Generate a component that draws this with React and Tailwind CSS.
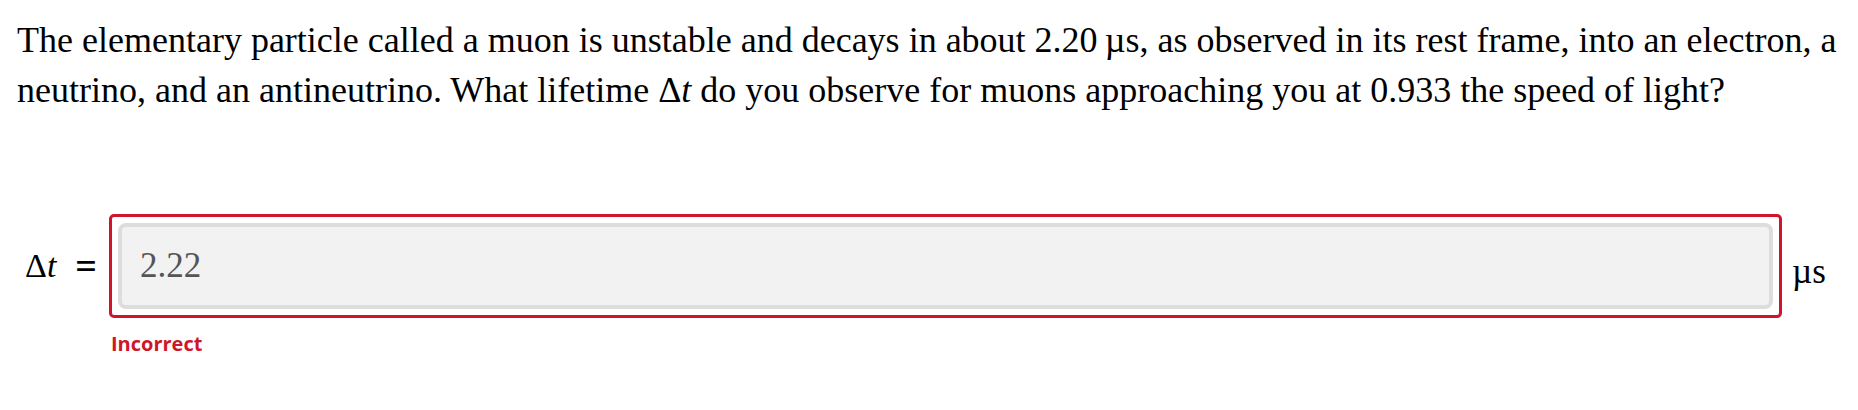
export default function App() {
  return (
    <div className="w-[1858px] h-[410px] bg-white pl-[17px] pt-[15px] font-['Liberation_Serif',_'Times_New_Roman',_serif] text-black">
      <p className="w-[1835px] text-[36px] leading-[50px]">
        The elementary particle called a muon is unstable and decays in about 2.20{'\u2009'}µs, as observed in its rest frame, into an
        electron, a neutrino, and an antineutrino. What lifetime Δ<i>t</i> do you observe for muons approaching you at 0.933 the speed
        of light?
      </p>

      <div className="mt-[99px] flex items-center">
        <div className="flex w-[92px] items-center pl-[8px] text-[34px] leading-none">
          <span>
            Δ<i>t</i>
          </span>
          <span className="ml-[19px] text-[38px] font-bold">=</span>
        </div>
        <div className="w-[1673px] rounded-[5px] border-[3px] border-[#d0152b] p-[6px]">
          <div className="flex h-[86px] items-center rounded-[8px] border-[4px] border-[#dddddd] bg-[#f2f2f2] pl-[18px] text-[35px] text-[#555555]">
            2.22
          </div>
        </div>
        <span className="ml-[10px] pt-[10px] text-[35px] leading-none">µs</span>
      </div>

      <div className="ml-[94px] mt-[12px] font-['Open_Sans',_sans-serif] text-[20px] font-bold leading-[28px] text-[#d0152b]">
        Incorrect
      </div>
    </div>
  )
}
